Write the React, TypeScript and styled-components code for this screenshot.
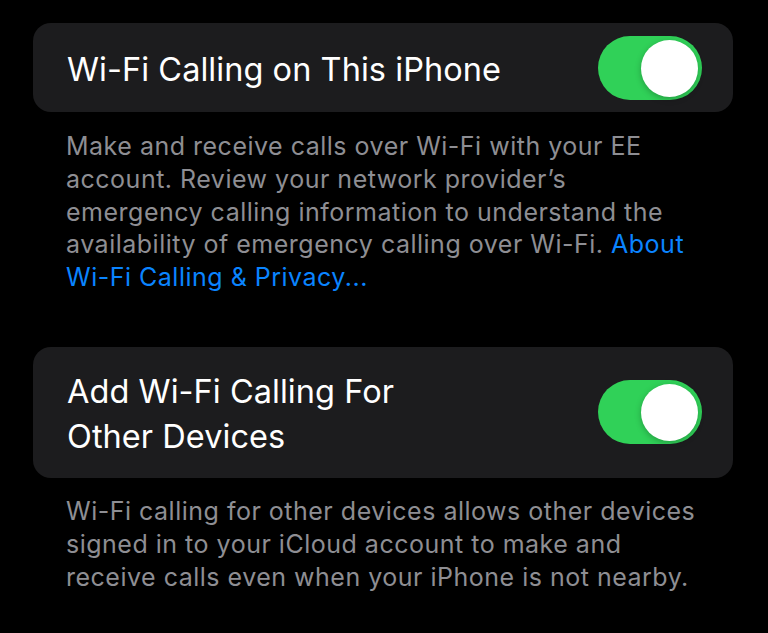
import React from "react";
import styled, { createGlobalStyle } from "styled-components";

const GlobalStyle = createGlobalStyle`
  html, body {
    margin: 0;
    padding: 0;
    background: #000;
  }
  body {
    font-family: Inter, "Noto Sans", sans-serif;
    -webkit-font-smoothing: antialiased;
  }
`;

const Page = styled.div`
  width: 768px;
  height: 633px;
  overflow: hidden;
  background: #000;
  padding: 23px 35px 0 33px;
  box-sizing: border-box;
`;

const Card = styled.div<{ $height: number }>`
  display: flex;
  align-items: center;
  justify-content: space-between;
  height: ${(p) => p.$height}px;
  padding: 0 31px 0 34px;
  box-sizing: border-box;
  background: #1c1c1e;
  border-radius: 18px;
`;

const Title = styled.div`
  padding-top: 4px;
  color: #fff;
  font-size: 32.5px;
  line-height: 45px;
  letter-spacing: 0.05px;
`;

const Toggle = styled.div<{ $on: boolean }>`
  position: relative;
  flex: none;
  width: 104px;
  height: 64px;
  border-radius: 32px;
  background: ${(p) => (p.$on ? "#30d158" : "#39393d")};
`;

const Knob = styled.div<{ $on: boolean }>`
  position: absolute;
  top: 4px;
  left: ${(p) => (p.$on ? "43px" : "4px")};
  width: 57px;
  height: 57px;
  border-radius: 50%;
  background: #fff;
  box-shadow: 0 2px 6px rgba(0, 0, 0, 0.25);
`;

const Footer = styled.p<{ $top: number }>`
  margin: ${(p) => p.$top}px 0 0;
  padding-left: 33px;
  color: #8e8e93;
  font-size: 25px;
  line-height: 32.8px;
  letter-spacing: 0.5px;
  white-space: nowrap;
`;

const Link = styled.span`
  color: #0a84ff;
`;

function Switch({ on }: { on: boolean }) {
  return (
    <Toggle $on={on}>
      <Knob $on={on} />
    </Toggle>
  );
}

function App() {
  return (
    <Page>
      <GlobalStyle />
      <Card $height={89}>
        <Title>Wi-Fi Calling on This iPhone</Title>
        <Switch on />
      </Card>
      <Footer $top={18}>
        Make and receive calls over Wi-Fi with your EE
        <br />
        account. Review your network provider’s
        <br />
        emergency calling information to understand the
        <br />
        availability of emergency calling over Wi-Fi. <Link>About</Link>
        <br />
        <Link>Wi-Fi Calling &amp; Privacy...</Link>
      </Footer>
      <Card $height={131} style={{ marginTop: 53 }}>
        <Title>
          Add Wi-Fi Calling For
          <br />
          Other Devices
        </Title>
        <Switch on />
      </Card>
      <Footer $top={17}>
        Wi-Fi calling for other devices allows other devices
        <br />
        signed in to your iCloud account to make and
        <br />
        receive calls even when your iPhone is not nearby.
      </Footer>
    </Page>
  );
}

export default App;
